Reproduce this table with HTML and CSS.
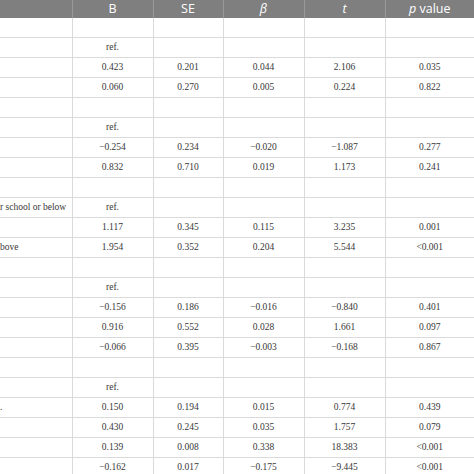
FILE: index.html
```html
<!DOCTYPE html>
<html>
<head>
<meta charset="utf-8">
<link rel="stylesheet" href="styles.css">
</head>
<body>
<table class="stats">
  <colgroup>
    <col class="c-label"><col class="c-b"><col class="c-se"><col class="c-beta"><col class="c-t"><col class="c-p">
  </colgroup>
  <thead>
    <tr><th></th><th>B</th><th>SE</th><th><i>β</i></th><th><i>t</i></th><th><i>p</i> value</th></tr>
  </thead>
  <tbody>
    <tr><td class="lab"></td><td></td><td></td><td></td><td></td><td></td></tr>
    <tr><td class="lab"></td><td>ref.</td><td></td><td></td><td></td><td></td></tr>
    <tr><td class="lab"></td><td>0.423</td><td>0.201</td><td>0.044</td><td>2.106</td><td>0.035</td></tr>
    <tr><td class="lab"></td><td>0.060</td><td>0.270</td><td>0.005</td><td>0.224</td><td>0.822</td></tr>
    <tr><td class="lab"></td><td></td><td></td><td></td><td></td><td></td></tr>
    <tr><td class="lab"></td><td>ref.</td><td></td><td></td><td></td><td></td></tr>
    <tr><td class="lab"></td><td>−0.254</td><td>0.234</td><td>−0.020</td><td>−1.087</td><td>0.277</td></tr>
    <tr><td class="lab"></td><td>0.832</td><td>0.710</td><td>0.019</td><td>1.173</td><td>0.241</td></tr>
    <tr><td class="lab"></td><td></td><td></td><td></td><td></td><td></td></tr>
    <tr><td class="lab">r school or below</td><td>ref.</td><td></td><td></td><td></td><td></td></tr>
    <tr><td class="lab"></td><td>1.117</td><td>0.345</td><td>0.115</td><td>3.235</td><td>0.001</td></tr>
    <tr><td class="lab">bove</td><td>1.954</td><td>0.352</td><td>0.204</td><td>5.544</td><td>&lt;0.001</td></tr>
    <tr><td class="lab"></td><td></td><td></td><td></td><td></td><td></td></tr>
    <tr><td class="lab"></td><td>ref.</td><td></td><td></td><td></td><td></td></tr>
    <tr><td class="lab"></td><td>−0.156</td><td>0.186</td><td>−0.016</td><td>−0.840</td><td>0.401</td></tr>
    <tr><td class="lab"></td><td>0.916</td><td>0.552</td><td>0.028</td><td>1.661</td><td>0.097</td></tr>
    <tr><td class="lab"></td><td>−0.066</td><td>0.395</td><td>−0.003</td><td>−0.168</td><td>0.867</td></tr>
    <tr><td class="lab"></td><td></td><td></td><td></td><td></td><td></td></tr>
    <tr><td class="lab"></td><td>ref.</td><td></td><td></td><td></td><td></td></tr>
    <tr><td class="lab">.</td><td>0.150</td><td>0.194</td><td>0.015</td><td>0.774</td><td>0.439</td></tr>
    <tr><td class="lab"></td><td>0.430</td><td>0.245</td><td>0.035</td><td>1.757</td><td>0.079</td></tr>
    <tr><td class="lab"></td><td>0.139</td><td>0.008</td><td>0.338</td><td>18.383</td><td>&lt;0.001</td></tr>
    <tr><td class="lab"></td><td>−0.162</td><td>0.017</td><td>−0.175</td><td>−9.445</td><td>&lt;0.001</td></tr>
  </tbody>
</table>
</body>
</html>
```

FILE: styles.css
```css
html, body {
  margin: 0;
  padding: 0;
  background: #ffffff;
  overflow: hidden;
  width: 474px;
  height: 474px;
}
.stats {
  border-collapse: collapse;
  table-layout: fixed;
  width: 474px;
  font-family: "Liberation Serif", "Times New Roman", serif;
  font-size: 9.5px;
  color: #383838;
}
.c-label { width: 72px; }
.c-b { width: 81px; }
.c-se { width: 70px; }
.c-beta { width: 81px; }
.c-t { width: 81px; }
.c-p { width: 89px; }
.stats th {
  background: #7f7f7f;
  color: #ffffff;
  font-family: "Open Sans", "Liberation Sans", sans-serif;
  font-weight: 500;
  font-size: 12.5px;
  height: 18px;
  padding: 0;
  text-align: center;
  border-left: 1px solid #999999;
  line-height: 18px;
}
.stats th:first-child { border-left: none; }
.stats th i { font-style: italic; }
.stats td {
  height: 19px;
  padding: 0;
  text-align: center;
  border-left: 1px solid #dadada;
  border-bottom: 1px solid #dadada;
  white-space: nowrap;
  line-height: 19px;
}
.stats td.lab {
  border-left: none;
  text-align: left;
  padding-left: 0;
}
```
